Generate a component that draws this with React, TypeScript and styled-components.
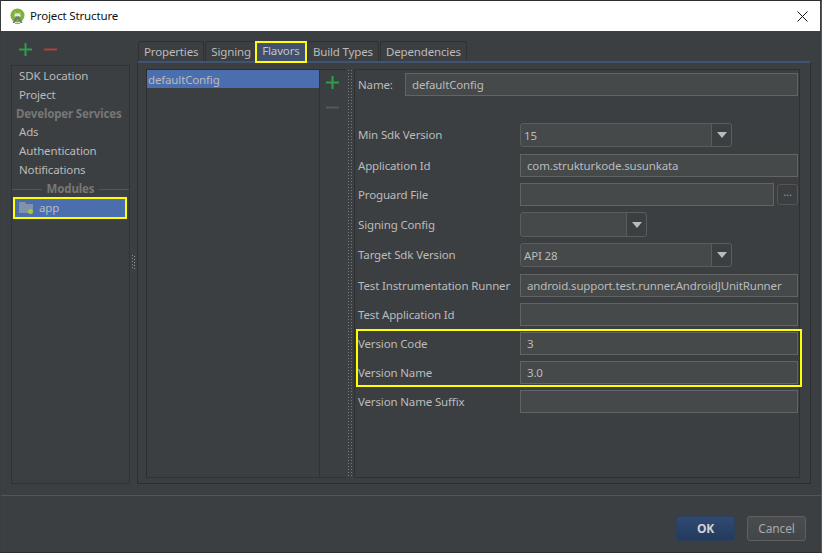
import React from "react";
import styled, { createGlobalStyle } from "styled-components";

const Global = createGlobalStyle`
  html, body { margin: 0; padding: 0; background: #3c3f41; }
  * { box-sizing: border-box; }
`;
const Win = styled.div`
  width: 822px; height: 553px; display: flex; flex-direction: column;
  background: #3c3f41; color: #bbbbbb; overflow: hidden;
  font: 11.5px/16px "Noto Sans", "Open Sans", sans-serif; letter-spacing: -0.15px;
  border-top: 1px solid #2b2d2e; border-left: 1px solid #3a3c3e;
  border-right: 1px solid #55585a; border-bottom: 1px solid #2b2d2e;
`;
const TitleBar = styled.div`
  height: 30px; background: #fff; flex: none; display: flex; align-items: center;
  padding: 0 12px 0 9px; gap: 5px; color: #111; margin-right: 1px;
`;
const Title = styled.div`flex: 1;`;
const Main = styled.div`
  height: 453px; flex: none; display: flex; padding: 10px 10px 0 10px;
`;
const Left = styled.div`width: 119px; flex: none; display: flex; flex-direction: column;`;
const LeftTools = styled.div`height: 24px; display: flex; align-items: center; gap: 12px; padding: 0 0 6px 8px;`;
const Side = styled.div`
  height: 420px; border: 1px solid #323232; padding-top: 1px; display: flex; flex-direction: column;
`;
const SideItem = styled.div`height: 18.8px; line-height: 18.8px; padding-left: 7px; white-space: nowrap;`;
const SideHead = styled.div`height: 18.8px; line-height: 18.8px; padding-left: 4px; font-weight: 700; color: #777; white-space: nowrap;`;
const ModHead = styled.div`
  height: 18.8px; display: flex; align-items: center; gap: 5px; font-weight: 700; color: #777;
  &::before, &::after { content: ""; flex: 1; height: 1px; background: #555; }
`;
const SideApp = styled.div`
  height: 22px; margin: -2px 2px 0 1px; background: #4b6eaf; display: flex; align-items: center; gap: 5px;
  padding-left: 4px; border: 2px solid #ffff00; color: #bbb; flex: none;
`;
const SplitV = styled.div`
  width: 7px; flex: none; display: flex; align-items: center; justify-content: center;
`;
const Tabs = styled.div`flex: 1; min-width: 0; display: flex; flex-direction: column;`;
const TabRow = styled.div`height: 20px; display: flex; gap: 1px; padding-left: 1px; align-items: flex-start;`;
const Tab = styled.div`
  height: 20px; padding: 0 5px; line-height: 20px; white-space: nowrap;
  border: 1px solid #2f3132; border-bottom: 0; border-radius: 3px 3px 0 0; background: #3c3f41;
`;
const ActiveTab = styled.div`
  width: 52px; height: 22px; line-height: 15px; text-align: center; white-space: nowrap; position: relative; z-index: 1;
  border: 2px solid #ffff00; background: #41516d; color: #c4c4c4; margin: 0 -1px 0 -3px;
`;
const TabBody = styled.div`
  height: 423px; border: 1px solid #2b2d2e; border-top: 2px solid #3f5375; padding: 6px 10px 6px 8px; display: flex;
`;
const ListPane = styled.div`
  width: 200px; flex: none; height: 409px; display: flex; border: 1px solid #2b2d2e; border-right: 0; border-bottom-color: #323232;
`;
const List = styled.div`width: 172px; flex: none;`;
const ListRow = styled.div`height: 18px; line-height: 19px; background: #4b6eaf; padding-left: 1px;`;
const ListTools = styled.div`
  flex: 1; border-left: 1px solid #323232; display: flex; flex-direction: column; align-items: center; padding: 6px 2px 0 0; gap: 12px;
`;
const Split = styled.div`
  width: 8px; flex: none; height: 409px;
  background-image: radial-gradient(#7a7a7a 0.6px, transparent 0.8px);
  background-size: 3px 3px; background-position: 1px 0;
`;
const Detail = styled.div`
  flex: 1; min-width: 0; height: 409px; border: 1px solid #2e3031; padding: 3px 1px 0 3px; display: flex; flex-direction: column;
`;
const Row = styled.div<{ $gap: number; $h?: number }>`
  display: flex; align-items: center; flex: none; height: ${p => p.$h ?? 23}px; margin-top: ${p => p.$gap}px;
`;
const Label = styled.div<{ $w?: number }>`width: ${p => p.$w ?? 162}px; flex: none; white-space: nowrap;`;
const Field = styled.div`
  flex: 1; height: 100%; background: #45494a; border: 1px solid #646464; padding: 0 6px; line-height: 21px; white-space: nowrap;
  min-width: 0;
`;
const Combo = styled.div<{ $w: number }>`
  width: ${p => p.$w}px; height: 100%; display: flex; background: #45494a; border: 1px solid #5a5d5e; border-radius: 3px;
`;
const ComboVal = styled.div`flex: 1; padding-left: 3px; line-height: 23px; border-right: 1px solid #5a5d5e;`;
const ComboBtn = styled.div`width: 19px; flex: none; display: flex; align-items: center; justify-content: center; background: #3c3f41; border-radius: 0 3px 3px 0;`;
const Arrow = styled.div`width: 0; height: 0; border: 5px solid transparent; border-top: 6px solid #bbb; border-bottom: 0;`;
const MoreBtn = styled.div`
  width: 21px; height: 21px; margin-left: 3px; flex: none; border: 1px solid #555; border-radius: 3px; text-align: center; line-height: 14px; color: #999; font-size: 11px;
`;
const Group = styled.div`
  margin-top: 6px; position: relative; display: flex; flex-direction: column;
  &::after { content: ""; position: absolute; top: -3px; bottom: -3px; left: -2px; right: -4px; border: 2px solid #ffff00; pointer-events: none; }
`;
const Footer = styled.div`
  flex: 1; margin: 11px 0 0 0; border-top: 1px solid #555; display: flex; justify-content: flex-end;
  align-items: flex-start; padding: 20px 15px 0 0; gap: 12px;
`;
const Btn = styled.div<{ $ok?: boolean }>`
  width: 59px; height: 25px; border-radius: 3px; text-align: center; line-height: 23px; font-size: 12px;
  border: 1px solid ${p => (p.$ok ? "#2b3f5e" : "#5e6060")};
  background: ${p => (p.$ok ? "linear-gradient(#2f4a72, #243a5c)" : "linear-gradient(#4a4d4f, #434648)")};
  font-weight: ${p => (p.$ok ? 700 : 400)}; color: ${p => (p.$ok ? "#cfd3d8" : "#a8a8a8")};
`;

const Plus = () => (
  <svg width="13" height="13" viewBox="0 0 13 13"><path d="M6.5 0v13M0 6.5h13" stroke="#2e9e4a" strokeWidth="2" /></svg>
);
const Minus = ({ color }: { color: string }) => (
  <svg width="13" height="13" viewBox="0 0 13 13"><path d="M0 6.5h13" stroke={color} strokeWidth="2" /></svg>
);
const Android = () => (
  <svg width="15" height="16" viewBox="0 0 15 16">
    <circle cx="7.5" cy="7.5" r="7" fill="#7fb23a" />
    <path d="M4.2 8.5a3.3 3.3 0 0 1 6.6 0z" fill="#e4e8dc" />
    <path d="M5 4.2l1 1.6M10 4.2l-1 1.6" stroke="#e4e8dc" strokeWidth=".7" />
    <path d="M6 8.5L2.5 15h2l3-4.5 3 4.5h2L9 8.5z" fill="#6f7a72" />
    <path d="M5 15.5h5" stroke="#9ba39d" strokeWidth="1" />
  </svg>
);
const Close = () => (
  <svg width="11" height="11" viewBox="0 0 11 11"><path d="M.5.5l10 10M10.5.5l-10 10" stroke="#111" strokeWidth="1" /></svg>
);
const Folder = () => (
  <svg width="15" height="14" viewBox="0 0 15 14">
    <path d="M0 1h6l1 2h7v9H0z" fill="#8093ad" />
    <circle cx="11.5" cy="10.5" r="2.5" fill="#a4c639" />
  </svg>
);
const Grip = () => (
  <svg width="4" height="16" viewBox="0 0 4 16">
    {[0, 1, 2, 3, 4].flatMap(i => [
      <rect key={`a${i}`} x="0" y={i * 3} width="1" height="1" fill="#888" />,
      <rect key={`b${i}`} x="2" y={i * 3 + 1} width="1" height="1" fill="#999" />,
    ])}
  </svg>
);

export default function App() {
  return (
    <Win>
      <Global />
      <TitleBar>
        <Android />
        <Title>Project Structure</Title>
        <Close />
      </TitleBar>
      <Main>
        <Left>
          <LeftTools><Plus /><Minus color="#a8443c" /></LeftTools>
          <Side>
            <SideItem>SDK Location</SideItem>
            <SideItem>Project</SideItem>
            <SideHead>Developer Services</SideHead>
            <SideItem>Ads</SideItem>
            <SideItem>Authentication</SideItem>
            <SideItem>Notifications</SideItem>
            <ModHead>Modules</ModHead>
            <SideApp><Folder />app</SideApp>
          </Side>
        </Left>
        <SplitV><Grip /></SplitV>
        <Tabs>
          <TabRow>
            <Tab>Properties</Tab>
            <Tab>Signing</Tab>
            <ActiveTab>Flavors</ActiveTab>
            <Tab>Build Types</Tab>
            <Tab>Dependencies</Tab>
          </TabRow>
          <TabBody>
            <ListPane>
              <List><ListRow>defaultConfig</ListRow></List>
              <ListTools><Plus /><Minus color="#55585a" /></ListTools>
            </ListPane>
            <Split />
            <Detail>
              <Row $gap={0}><Label $w={47}>Name:</Label><Field>defaultConfig</Field></Row>
              <Row $gap={27} $h={24}><Label>Min Sdk Version</Label><Combo $w={212}><ComboVal>15</ComboVal><ComboBtn><Arrow /></ComboBtn></Combo></Row>
              <Row $gap={7}><Label>Application Id</Label><Field>com.strukturkode.susunkata</Field></Row>
              <Row $gap={6}><Label>Proguard File</Label><Field /><MoreBtn>...</MoreBtn></Row>
              <Row $gap={6} $h={25}><Label>Signing Config</Label><Combo $w={127}><ComboVal /><ComboBtn><Arrow /></ComboBtn></Combo></Row>
              <Row $gap={6} $h={24}><Label>Target Sdk Version</Label><Combo $w={212}><ComboVal>API 28</ComboVal><ComboBtn><Arrow /></ComboBtn></Combo></Row>
              <Row $gap={7}><Label>Test Instrumentation Runner</Label><Field>android.support.test.runner.AndroidJUnitRunner</Field></Row>
              <Row $gap={6}><Label>Test Application Id</Label><Field /></Row>
              <Group>
                <Row $gap={0}><Label>Version Code</Label><Field>3</Field></Row>
                <Row $gap={6}><Label>Version Name</Label><Field>3.0</Field></Row>
              </Group>
              <Row $gap={6}><Label>Version Name Suffix</Label><Field /></Row>
            </Detail>
          </TabBody>
        </Tabs>
      </Main>
      <Footer>
        <Btn $ok>OK</Btn>
        <Btn>Cancel</Btn>
      </Footer>
    </Win>
  );
}
